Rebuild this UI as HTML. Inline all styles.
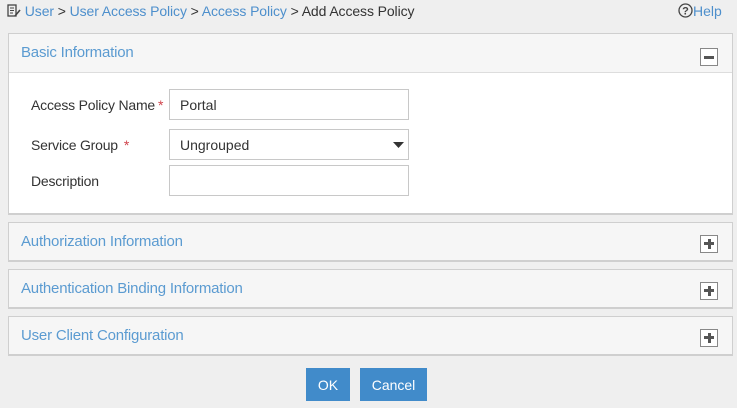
<!DOCTYPE html>
<html><head><meta charset="utf-8"><style>
body{margin:0;width:737px;height:408px;background:#efefef;font-family:"Liberation Sans","DejaVu Sans",sans-serif;position:relative;overflow:hidden}
.a{position:absolute}
.bc{left:7px;top:3px;font-size:14px;color:#333;white-space:nowrap;letter-spacing:-0.1px}
.bc span.l{color:#4d8fcc}
.help{left:678px;top:3px;font-size:14px;color:#4d8fcc}
.panel{position:absolute;left:8px;width:725px;border:1px solid #cfcfcf;border-bottom:2px solid #cfcfcf;background:#f6f6f6;box-sizing:border-box}
.ph{position:absolute;left:12px;font-size:15px;color:#5b9bd1;letter-spacing:-0.2px}
.tog{position:absolute;width:16px;height:16px;border:1px solid #888;background:#fff}
.tog i{position:absolute;background:#555}
.lbl{position:absolute;left:31px;font-size:14px;color:#333;letter-spacing:-0.2px}
.st{color:#d0434b;margin-left:3px}
.in{position:absolute;left:169px;width:240px;height:31px;border:1px solid #c8c8c8;background:#fff;box-sizing:border-box;font-size:14px;color:#333;padding:7px 0 0 10px}
.btn{position:absolute;top:368px;height:33px;background:#418bca;color:#fff;font-size:14px;text-align:center;line-height:35px}
</style></head><body>
<div class="a bc"><svg width="14" height="14" viewBox="0 0 14 14" style="vertical-align:-2px"><rect x="1" y="1" width="8" height="11" fill="none" stroke="#444" stroke-width="1.3"/><path d="M3 4h4M3 6.5h4M3 9h3" stroke="#444"/><path d="M8 12l5-6" stroke="#444" stroke-width="1.6"/></svg> <span class="l">User</span> &gt; <span class="l">User Access Policy</span> &gt; <span class="l">Access Policy</span> &gt; Add Access Policy</div>
<div class="a help"><svg width="15" height="15" viewBox="0 0 15 15" style="vertical-align:-2px"><circle cx="7.5" cy="7.5" r="6.5" fill="none" stroke="#444" stroke-width="1.3"/><text x="7.5" y="11.5" font-size="11" font-weight="bold" text-anchor="middle" fill="#444" font-family="Liberation Sans">?</text></svg>Help</div>

<div class="panel" style="top:33px;height:182px;background:#fff">
 <div style="position:absolute;left:0;top:0;right:0;height:38px;background:#f6f6f6;border-bottom:1px solid #ddd"></div>
 <div class="ph" style="top:10px">Basic Information</div>
 <div class="tog" style="left:691px;top:14px"><i style="left:3px;top:7px;width:10px;height:3px"></i></div>
</div>
<div class="lbl" style="top:97px">Access Policy Name<span class="st">*</span></div>
<div class="in" style="top:89px">Portal</div>
<div class="lbl" style="top:137px">Service Group<span class="st" style="margin-left:6px">*</span></div>
<div class="in" style="top:129px">Ungrouped<svg class="a" style="left:223px;top:12px" width="11" height="6"><path d="M0 0h11L5.5 6z" fill="#333"/></svg></div>
<div class="lbl" style="top:173px">Description</div>
<div class="in" style="top:165px"></div>

<div class="panel" style="top:222px;height:40px"><div class="ph" style="top:10px">Authorization Information</div><div class="tog" style="left:691px;top:12px"><i style="left:3px;top:6px;width:10px;height:3px"></i><i style="left:6.5px;top:3px;width:3px;height:10px"></i></div></div>
<div class="panel" style="top:269px;height:40px"><div class="ph" style="top:10px">Authentication Binding Information</div><div class="tog" style="left:691px;top:12px"><i style="left:3px;top:6px;width:10px;height:3px"></i><i style="left:6.5px;top:3px;width:3px;height:10px"></i></div></div>
<div class="panel" style="top:316px;height:40px"><div class="ph" style="top:10px">User Client Configuration</div><div class="tog" style="left:691px;top:12px"><i style="left:3px;top:6px;width:10px;height:3px"></i><i style="left:6.5px;top:3px;width:3px;height:10px"></i></div></div>

<div class="btn" style="left:306px;width:44px">OK</div>
<div class="btn" style="left:360px;width:67px">Cancel</div>
</body></html>
